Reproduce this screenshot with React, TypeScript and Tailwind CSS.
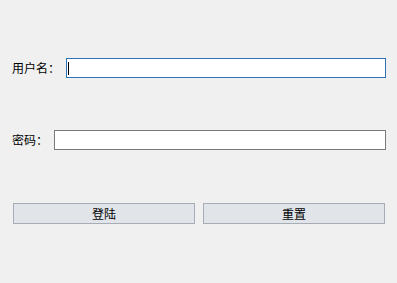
export default function App() {
  return (
    <div
      className="h-[283px] w-[397px] bg-[#f0f0f0] pl-[12px] pr-[11px] pt-[58px] text-[12px] text-black"
      style={{ fontFamily: '"Noto Sans CJK SC", "Microsoft YaHei", sans-serif' }}
    >
      {/* username */}
      <div className="flex h-[20px] items-center gap-[6px]">
        <span className="leading-none">用户名：</span>
        <div className="flex h-[20px] flex-1 items-center border border-[#2f73b4] bg-white pl-[1px]">
          <span className="h-[13px] w-[1px] bg-black" />
        </div>
      </div>

      {/* password */}
      <div className="mt-[52px] flex h-[20px] items-center gap-[6px]">
        <span className="leading-none">密码：</span>
        <div className="h-[20px] flex-1 border border-[#7a7a7a] bg-white" />
      </div>

      {/* buttons */}
      <div className="mt-[53px] flex h-[21px] gap-[8px] px-[1px]">
        <button className="flex-1 border border-[#a7adb6] bg-[#e1e5ea] leading-none">
          登陆
        </button>
        <button className="flex-1 border border-[#a7adb6] bg-[#e1e5ea] leading-none">
          重置
        </button>
      </div>
    </div>
  )
}
